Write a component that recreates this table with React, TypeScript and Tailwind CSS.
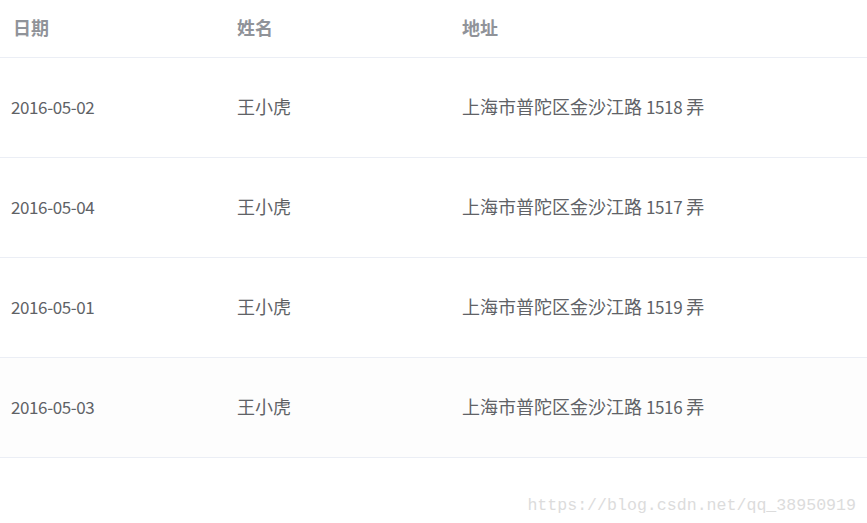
const rows = [
  { date: "2016-05-02", name: "王小虎", no: "1518" },
  { date: "2016-05-04", name: "王小虎", no: "1517" },
  { date: "2016-05-01", name: "王小虎", no: "1519" },
  { date: "2016-05-03", name: "王小虎", no: "1516" },
];

export default function App() {
  return (
    <div className="relative h-[523px] w-[867px] overflow-hidden bg-white font-['Noto_Sans_CJK_SC',sans-serif] text-[18px]">
      <div className="grid h-[58px] grid-cols-[225px_225px_1fr] items-center border-b border-[#ebeef5] pb-[3px] font-bold text-[#909399]">
        <div className="pl-[13px]">日期</div>
        <div className="pl-[12px]">姓名</div>
        <div className="pl-[12px]">地址</div>
      </div>
      {rows.map((r, i) => (
        <div
          key={r.date}
          className={
            "grid h-[100px] grid-cols-[225px_225px_1fr] items-center border-b border-[#ebeef5] pb-[2px] text-[#606266] " +
            (i === 3 ? "bg-[#fdfdfd]" : "bg-white")
          }
        >
          <div className="pl-[11px] text-[17px] tracking-[-0.4px]">{r.date}</div>
          <div className="pl-[12px]">{r.name}</div>
          <div className="pl-[12px]">
            上海市普陀区金沙江路 <span className="text-[17px] tracking-[-0.4px]">{r.no}</span> 弄
          </div>
        </div>
      ))}
      <div className="absolute right-[11px] bottom-[4px] font-['Liberation_Mono',monospace] text-[16.6px] text-[#dcdcdc]">
        https://blog.csdn.net/qq_38950919
      </div>
    </div>
  );
}
